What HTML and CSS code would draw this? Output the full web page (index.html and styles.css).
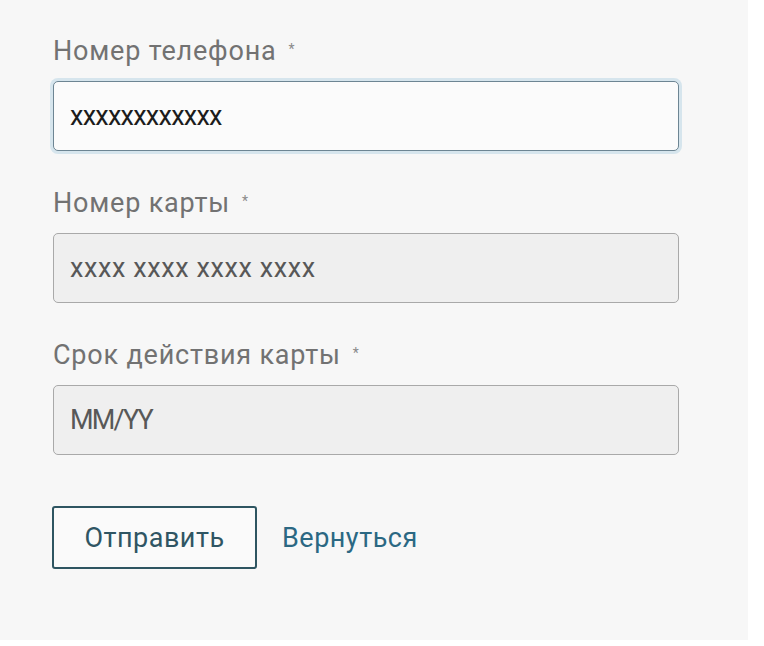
FILE: index.html
```html
<!DOCTYPE html>
<html lang="ru">
<head>
<meta charset="utf-8">
<link rel="stylesheet" href="styles.css">
</head>
<body>
<form class="panel">
  <div class="field">
    <label class="label">Номер телефона<span class="req">*</span></label>
    <div class="input focused"><span class="value phone">xxxxxxxxxxxx</span></div>
  </div>
  <div class="field">
    <label class="label">Номер карты<span class="req">*</span></label>
    <div class="input placeholder"><span class="value card">xxxx xxxx xxxx xxxx</span></div>
  </div>
  <div class="field">
    <label class="label">Срок действия карты<span class="req">*</span></label>
    <div class="input placeholder"><span class="value expiry">MM/YY</span></div>
  </div>
  <div class="actions">
    <button type="button" class="btn">Отправить</button>
    <a class="link">Вернуться</a>
  </div>
</form>
</body>
</html>
```
FILE: styles.css
```css
html, body {
  margin: 0;
  padding: 0;
  background: #ffffff;
}
body {
  font-family: Roboto, "Liberation Sans", sans-serif;
}
.panel {
  width: 748px;
  height: 640px;
  box-sizing: border-box;
  background: #f7f7f7;
  padding: 35px 0 0 53px;
  display: flex;
  flex-direction: column;
}
.field {
  display: flex;
  flex-direction: column;
  width: 626px;
  margin-bottom: 36px;
}
.label {
  display: block;
  height: 32px;
  font-size: 27px;
  line-height: 32px;
  letter-spacing: 0.8px;
  color: #727272;
  margin-bottom: 14px;
}
.req {
  display: inline-block;
  vertical-align: top;
  font-size: 14px;
  line-height: 28px;
  color: #8a8a8a;
  margin-left: 12px;
}
.input {
  height: 70px;
  box-sizing: border-box;
  border-radius: 5px;
  padding: 0 16px;
  display: flex;
  align-items: center;
  font-size: 27px;
}
.focused {
  background: #fbfbfb;
  border: 1px solid #6d8593;
  box-shadow: 0 0 0 3px #d6e5ed;
  color: #1c1c1c;
}
.placeholder {
  background: #efefef;
  border: 1px solid #a9a9a9;
  color: #585858;
}
.phone {
  letter-spacing: -0.75px;
}
.card {
  letter-spacing: 0.6px;
}
.expiry {
  letter-spacing: -1.8px;
}
.actions {
  display: flex;
  align-items: center;
  gap: 25px;
  margin-top: 15px;
}
.btn {
  width: 205px;
  height: 63px;
  margin-left: -1px;
  box-sizing: border-box;
  background: #fafafa;
  border: 2px solid #2e5561;
  border-radius: 3px;
  font-family: inherit;
  font-size: 27px;
  letter-spacing: 0.5px;
  color: #2f5563;
  padding: 0;
}
.link {
  font-size: 27px;
  letter-spacing: 0.5px;
  color: #2b6883;
}
```
